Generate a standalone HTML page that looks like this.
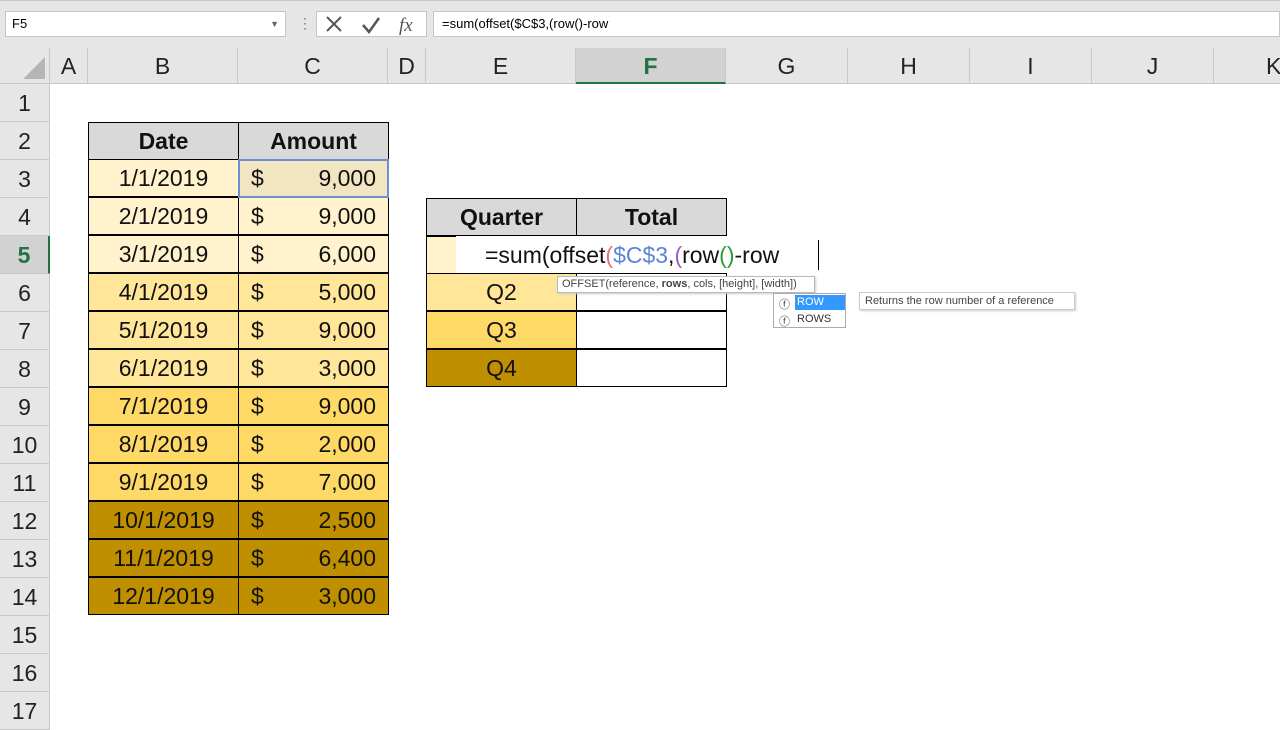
<!DOCTYPE html>
<html><head><style>
*{margin:0;padding:0;box-sizing:border-box}
body{width:1280px;height:720px;overflow:hidden;background:#fff;font-family:"Liberation Sans",sans-serif;position:relative}
.abs{position:absolute}
.top{left:0;top:0;width:1280px;height:48px;background:#e6e6e6;border-top:1px solid #c8c8c8}
.box{background:#fff;border:1px solid #c6c6c6}
.ch{top:48px;height:36px;background:#e6e6e6;border-right:1px solid #c8c8c8;border-bottom:1px solid #c8c8c8;font-size:23px;color:#222;text-align:center;line-height:36px}
.rh{left:0;width:50px;height:38px;background:#e6e6e6;border-bottom:1px solid #c8c8c8;border-right:1px solid #c8c8c8;font-size:23px;color:#222;text-align:center;line-height:38px}
.c{height:38px;border:1px solid #000;font-size:23px;line-height:36px;text-align:center;color:#111}
.h{background:#d9d9d9;font-weight:bold}
</style></head><body>
<div class="abs top"></div>
<div class="abs box" style="left:5px;top:11px;width:281px;height:26px;font-size:13px;line-height:24px;padding-left:6px">F5<span style="position:absolute;right:6px;top:0;font-size:9px;color:#666">▼</span></div>
<div class="abs" style="left:243px;top:15px;color:#777;font-size:14px;left:298px">⋮</div>
<div class="abs box" style="left:316px;top:11px;width:111px;height:26px"></div>
<svg class="abs" style="left:324px;top:14px" width="100" height="22"><path d="M3 3L17 17M17 3L3 17" stroke="#555" stroke-width="2"/><path d="M39 11l6 7 10-14" stroke="#555" stroke-width="2.5" fill="none"/><text x="75" y="17" font-family="Liberation Serif" font-style="italic" font-size="19" fill="#555">fx</text></svg>
<div class="abs box" style="left:433px;top:11px;width:847px;height:26px;font-size:13px;line-height:24px;padding-left:8px">=sum(offset($C$3,(row()-row</div>
<div class="abs" style="left:0;top:48px;width:50px;height:36px;background:#e6e6e6;border-right:1px solid #c8c8c8;border-bottom:1px solid #c8c8c8"><div style="position:absolute;right:4px;bottom:4px;width:0;height:0;border-left:22px solid transparent;border-bottom:22px solid #b5b5b5"></div></div>
<div class="abs ch" style="left:50px;width:38px">A</div>
<div class="abs ch" style="left:88px;width:150px">B</div>
<div class="abs ch" style="left:238px;width:150px">C</div>
<div class="abs ch" style="left:388px;width:38px">D</div>
<div class="abs ch" style="left:426px;width:150px">E</div>
<div class="abs ch" style="left:576px;width:150px;background:#d2d2d2;color:#217346;font-weight:bold;border-bottom:2px solid #217346">F</div>
<div class="abs ch" style="left:726px;width:122px">G</div>
<div class="abs ch" style="left:848px;width:122px">H</div>
<div class="abs ch" style="left:970px;width:122px">I</div>
<div class="abs ch" style="left:1092px;width:122px">J</div>
<div class="abs ch" style="left:1214px;width:122px;text-align:left;padding-left:52px">K</div>
<div class="abs rh" style="top:84px">1</div><div class="abs rh" style="top:122px">2</div><div class="abs rh" style="top:160px">3</div><div class="abs rh" style="top:198px">4</div>
<div class="abs rh" style="top:236px;background:#d2d2d2;color:#217346;font-weight:bold;border-right:2px solid #217346">5</div>
<div class="abs rh" style="top:274px">6</div><div class="abs rh" style="top:312px">7</div><div class="abs rh" style="top:350px">8</div><div class="abs rh" style="top:388px">9</div><div class="abs rh" style="top:426px">10</div><div class="abs rh" style="top:464px">11</div><div class="abs rh" style="top:502px">12</div><div class="abs rh" style="top:540px">13</div><div class="abs rh" style="top:578px">14</div><div class="abs rh" style="top:616px">15</div><div class="abs rh" style="top:654px">16</div><div class="abs rh" style="top:692px">17</div>

<div class="abs c h" style="left:88px;top:122px;width:151px">Date</div>
<div class="abs c h" style="left:238px;top:122px;width:151px">Amount</div>
<div id="rows"></div>
<script>
var d=[["1/1/2019","9,000","#fff2cc"],["2/1/2019","9,000","#fff2cc"],["3/1/2019","6,000","#fff2cc"],["4/1/2019","5,000","#ffe699"],["5/1/2019","9,000","#ffe699"],["6/1/2019","3,000","#ffe699"],["7/1/2019","9,000","#ffd966"],["8/1/2019","2,000","#ffd966"],["9/1/2019","7,000","#ffd966"],["10/1/2019","2,500","#bf8f00"],["11/1/2019","6,400","#bf8f00"],["12/1/2019","3,000","#bf8f00"]];
var h="";d.forEach(function(r,i){var t=159+38*i;h+='<div class="abs c" style="left:88px;top:'+t+'px;width:151px;background:'+r[2]+'">'+r[0]+'</div><div class="abs c" style="left:238px;top:'+t+'px;width:151px;background:'+r[2]+';text-align:right;padding-right:12px"><span style="position:absolute;left:12px">$</span>'+r[1]+'</div>';});
document.getElementById("rows").innerHTML=h;
</script>
<div class="abs" style="left:238px;top:159px;width:151px;height:39px;border:2px solid #6f8fd0;background:rgba(0,0,0,0.05)"></div>
<div class="abs c h" style="left:426px;top:198px;width:151px">Quarter</div>
<div class="abs c h" style="left:576px;top:198px;width:151px">Total</div>
<div class="abs c" style="left:426px;top:236px;width:151px;background:#fff2cc;border-bottom:none"></div>
<div class="abs c" style="left:426px;top:273px;width:151px;background:#ffe699">Q2</div>
<div class="abs c" style="left:576px;top:273px;width:151px"></div>
<div class="abs c" style="left:426px;top:311px;width:151px;background:#ffd966">Q3</div>
<div class="abs c" style="left:576px;top:311px;width:151px"></div>
<div class="abs c" style="left:426px;top:349px;width:151px;background:#bf8f00">Q4</div>
<div class="abs c" style="left:576px;top:349px;width:151px"></div>
<div class="abs" style="left:456px;top:236px;width:364px;height:37px;background:#fff;font-size:23px;line-height:38px;padding-left:29px;color:#111;white-space:nowrap">=sum(offset<span style="color:#e0707a">(</span><span style="color:#5b84d8">$C$3</span>,<span style="color:#9a5fc0">(</span>row<span style="color:#2f9a3a">()</span>-row</div>
<div class="abs" style="left:818px;top:240px;width:1px;height:30px;background:#000"></div>
<div class="abs" style="left:557px;top:276px;width:258px;height:17px;background:#fff;border:1px solid #bbb;font-size:11px;line-height:15px;padding-left:4px;color:#444;white-space:nowrap;box-shadow:1px 1px 2px #ccc">OFFSET(reference, <b>rows</b>, cols, [height], [width])</div>
<div class="abs" style="left:773px;top:293px;width:73px;height:35px;background:#fff;border:1px solid #aaa;font-size:11px;color:#333">
<div style="position:absolute;left:5px;top:2px">ⓕ</div><div style="position:absolute;left:21px;top:1px;width:50px;height:15px;background:#3399ff;color:#fff;padding-left:2px;line-height:15px">ROW</div>
<div style="position:absolute;left:5px;top:19px">ⓕ</div><div style="position:absolute;left:23px;top:18px;line-height:15px">ROWS</div></div>
<div class="abs" style="left:859px;top:292px;width:216px;height:18px;background:#fff;border:1px solid #ccc;font-size:11px;line-height:16px;padding-left:5px;color:#444;box-shadow:1px 1px 2px #ccc">Returns the row number of a reference</div>
</body></html>
